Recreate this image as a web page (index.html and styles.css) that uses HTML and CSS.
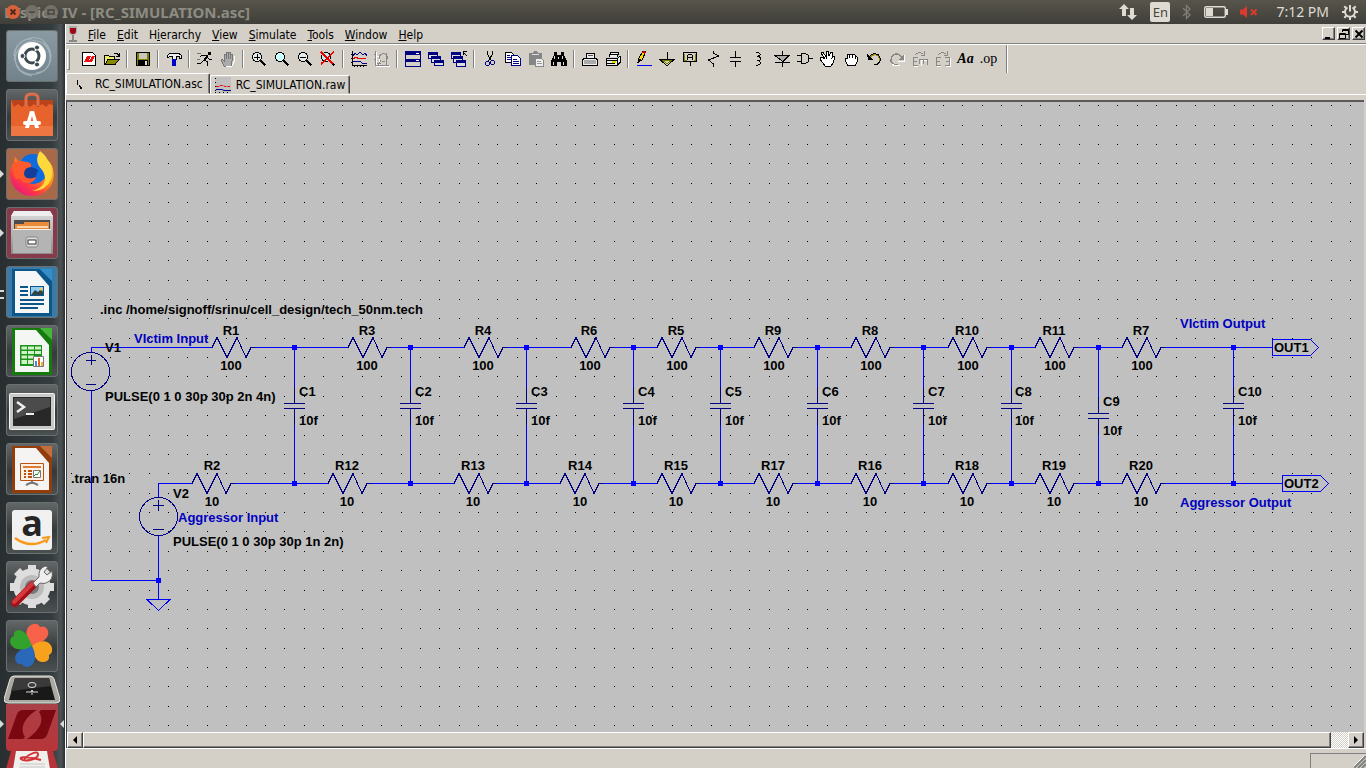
FILE: index.html
```html
<!DOCTYPE html>
<html lang="en">
<head>
<meta charset="utf-8">
<title>LTspice IV - [RC_SIMULATION.asc]</title>
<link rel="stylesheet" href="styles.css">
</head>
<body>
<header class="panel">
  <h1 class="panel-title">LTspice IV - [RC_SIMULATION.asc]</h1>
  <div class="window-buttons">
    <button class="wb wb-close" aria-label="Close"><svg width="14" height="14" viewBox="0 0 14 14"><path d="M4.500 4.500l5 5m0-5l-5 5" stroke="#4a2a1e" stroke-width="1.800"/></svg></button>
    <button class="wb" aria-label="Minimize"><svg width="14" height="14" viewBox="0 0 14 14"><path d="M4 7h6" stroke="#45443f" stroke-width="1.600"/></svg></button>
    <button class="wb" aria-label="Restore"><svg width="14" height="14" viewBox="0 0 14 14"><path d="M4 5h6v4H4z" fill="none" stroke="#45443f" stroke-width="1.400"/></svg></button>
  </div>
  <div class="tray">
    <svg width="18" height="16" viewBox="0 0 18 16" fill="#dfdbd2"><path d="M5 0l5 5H7v7H3V5H0zM13 16l-5-5h3V4h4v7h3z"/></svg>
    <span class="lang">En</span>
    <svg width="10" height="16" viewBox="0 0 10 16" fill="none" stroke="#7f7d75" stroke-width="1.300"><path d="M1 4l7 7-3.500 3.500v-13L8 5l-7 7"/></svg>
    <svg class="battery" width="24" height="12" viewBox="0 0 24 12"><rect x=".700" y=".700" width="20.600" height="10.600" rx="1.500" fill="none" stroke="#dfdbd2" stroke-width="1.400"/><path fill="#dfdbd2" d="M2 2h7v8H2zM22 3h2v6h-2z"/></svg>
    <svg class="sound" width="18" height="12" viewBox="0 0 18 12"><path fill="#df382c" d="M0 3.500h3L7 0v12L3 8.500H0z"/><path d="M11 3.500l5.500 5.500m0-5.500L11 9" stroke="#df382c" stroke-width="2"/></svg>
    <time class="clock">7:12 PM</time>
    <svg width="16" height="16" viewBox="0 0 16 16" fill="none" stroke="#dfdbd2"><path d="M5.500 3.500a5 5 0 1 0 5 0" stroke-width="2"/><path d="M8 1v6.500M0 8h3M13 8h3M8 13v3M2.300 2.300l2 2M13.700 2.300l-2 2M2.300 13.700l2-2M13.700 13.700l-2-2" stroke-width="2"/></svg>
  </div>
</header>
<div class="desktop">
  <nav class="dock" aria-label="Launcher">
    <a class="tile tile-dash" href="#dash" aria-label="Dash"><svg width="52" height="52" viewBox="0 0 52 52"><g fill="none" stroke="#b4c0c6" stroke-width="1.200" opacity=".7"><path d="M8 26C8 8 34 2 40 14M14 40C2 24 12 8 26 9M26 46C10 44 6 30 12 20M44 26C46 42 26 50 14 40M38 12c12 10 8 30-8 31M8 30C14 4 42 6 44 26"/></g><circle cx="26" cy="26" r="14" fill="#fff"/><circle cx="26" cy="26" r="7" fill="none" stroke="#3d4a50" stroke-width="3"/><g stroke="#fff" stroke-width="1.500"><path d="M14 26h5M32 16l-3 5M32 36l-3-5"/></g><g fill="#3d4a50" stroke="#fff"><circle cx="16.500" cy="26" r="2.500"/><circle cx="31" cy="17.500" r="2.500"/><circle cx="31" cy="34.500" r="2.500"/></g></svg></a>
    <a class="tile" href="#software" aria-label="Software"><svg width="52" height="52" viewBox="0 0 52 52"><path d="M5 11h42v36H5z" fill="#e8622c"/><path d="M5 11h42v5l-4-1-3 3-4-3-4 3-4-3-4 3-4-3-4 3-4-3-4 3z" fill="#bb431b"/><path d="M5 37h42v10H5z" fill="#ee7642"/><path d="M20 17V9q0-4 6-4t6 4v8" fill="none" stroke="#dd6e4a" stroke-width="3"/><path d="M24 22h4l5 17h-4l-3-12-3 12h-4z" fill="#fff"/><rect x="17" y="32" width="18" height="4" rx="2" fill="#fff"/></svg></a>
    <a class="tile tile-firefox running" href="#firefox" aria-label="Firefox"><svg width="52" height="52" viewBox="0 0 52 52"><defs><linearGradient id="fx" x1="1" y1="0" x2=".2" y2="1"><stop offset="0" stop-color="#fff44f"/><stop offset=".4" stop-color="#ff980e"/><stop offset=".75" stop-color="#ff3647"/><stop offset="1" stop-color="#e31587"/></linearGradient></defs><path d="M8 14l1-5 4 5C22 4 40 4 46 18c6 18-6 30-20 30S1 35 5 20z" fill="url(#fx)"/><circle cx="27" cy="21" r="15" fill="#0f6be0"/><path d="M16 22c5-5 12-3 16 0l-3 9H18z" fill="#133f9b"/><path d="M8 14c7-2 12 0 12 0 4 0 6 2 5 5-7 1-6 4-7 6 0 8 10 5 12 4-2 8-13 8-17 1C10 35 5 26 8 14z" fill="#ff5a2d"/><path d="M34 3c2 2 6 4 8 10 10 15 0 31-16 30 15-4 15-14 10-21-5-6-7-11-2-19z" fill="#ffd93b"/></svg></a>
    <a class="tile tile-files running" href="#files" aria-label="Files"><svg width="52" height="52" viewBox="0 0 52 52"><defs><linearGradient id="fm" x2="0" y2="1"><stop stop-color="#dcdcdc"/><stop offset="1" stop-color="#8b8b8b"/></linearGradient></defs><path d="M8 4h36l3 5v38H5V9z" fill="url(#fm)"/><path d="M8 4h36l3 5H5z" fill="#eee"/><path d="M8 13h36v10H8z" fill="#4c4c4c"/><path d="M9 17h9v-2h25v8H9z" fill="#ec8a3c"/><path d="M11 19h31v2H11z" fill="#f7d6ae"/><path d="M7 22h38v24H7z" fill="#b4b4b4"/><path d="M7 22h38v1H7z" fill="#eee"/><rect x="20" y="30" width="12" height="10" rx="2" fill="#ddd" stroke="#888"/><rect x="22" y="33" width="8" height="4" fill="#fff" stroke="#333"/></svg></a>
    <a class="tile tile-writer running-many" href="#writer" aria-label="Writer"><svg width="52" height="52" viewBox="0 0 52 52"><path d="M6 3h28l12 12v35H6z" fill="#0d568a"/><path d="M34 3h12v12z" fill="#328fca"/><path d="M9 5h21l13 15v27H9z" fill="#f4f6f7"/><path d="M14 21h8M14 25h8M14 29h8M14 34h24M14 38h24M14 42h18" stroke="#0d568a" stroke-width="2"/><path d="M24 20h14v10H24z" fill="#0d568a"/><path d="M25 21h12v8H25z" fill="#90cdf0"/><path d="M25 29l4-5 3 2 3-3 2 3v3z" fill="#344"/><circle cx="35" cy="23" r="1.500" fill="#f8cf52"/></svg></a>
    <a class="tile" href="#calc" aria-label="Calc"><svg width="52" height="52" viewBox="0 0 52 52"><path d="M6 3h28l12 12v35H6z" fill="#157b0c"/><path d="M34 3h12v12z" fill="#45b83a"/><path d="M9 5h21l13 15v27H9z" fill="#f4f6f4"/><path d="M14 20h22v21H14z" fill="#1c911b"/><path d="M15.500 21.500H21v3h-5.500zM22 21.500h6v3h-6zM29 21.500h6v3h-6zM15.500 26H21v3h-5.500zM22 26h6v3h-6zM29 26h6v3h-6zM15.500 30.500H21v3h-5.500zM22 30.500h6v3h-6zM15.500 35H21v4h-5.500zM22 35h6v4h-6z" fill="#d1f4c7"/><path d="M27.500 31.500h10v10h-10z" fill="#fff" stroke="#777"/><path d="M29 36h2v5h-2z" fill="#3a8fd8"/><path d="M32 33h2v8h-2z" fill="#e4622a"/><path d="M35 37h2v4h-2z" fill="#f0b429"/></svg></a>
    <a class="tile" href="#terminal" aria-label="Terminal"><svg width="52" height="52" viewBox="0 0 52 52"><rect x="3.500" y="9.500" width="45" height="36" rx="1" fill="#c9c9c9" stroke="#f3f3f3"/><path d="M7 13h38v29H7z" fill="#282828"/><path d="M8 14h36v9L8 35z" fill="#4b4b4b"/><path d="M11 18l7 5-7 5" fill="none" stroke="#eee" stroke-width="2.500"/><path d="M20 30h8" stroke="#eee" stroke-width="2"/></svg></a>
    <a class="tile" href="#impress" aria-label="Impress"><svg width="52" height="52" viewBox="0 0 52 52"><path d="M6 3h28l12 12v35H6z" fill="#933d0b"/><path d="M34 3h12v12z" fill="#c66d3c"/><path d="M9 5h21l13 15v27H9z" fill="#f5f4f3"/><path d="M14.500 20.500h23v17h-23z" fill="#fff1e5" stroke="#b95113"/><path d="M17 23h18v2H17z" fill="#de7d37"/><path d="M18 28h2M18 31h2M18 34h2M22 28h4M22 31h4M22 34h4" stroke="#b95113" stroke-width="2"/><path d="M27.500 27.500h7v7h-7z" fill="#fff" stroke="#777"/><path d="M28 33l2-2 1 1 3-4" fill="none" stroke="#188c24"/><path d="M20 42l6-3 6 3M26 38v3" fill="none" stroke="#777" stroke-width="2"/></svg></a>
    <a class="tile" href="#amazon" aria-label="Amazon"><svg width="52" height="52" viewBox="0 0 52 52"><rect x="6" y="8" width="40" height="40" rx="3" fill="#f1f1f1"/><text class="amazon-letter" x="26" y="34">a</text><path d="M9 36q15 11 31 2" fill="none" stroke="#f79a19" stroke-width="2.500"/><path d="M36 36l7-1-3 6" fill="none" stroke="#f79a19" stroke-width="2"/></svg></a>
    <a class="tile" href="#settings" aria-label="System Settings"><svg width="52" height="52" viewBox="0 0 52 52"><circle cx="26" cy="26" r="14" fill="none" stroke="#ddd" stroke-width="9"/><path d="M22 4h8v6h-8zM22 41h8v6h-8zM4 22h6v8H4zM42 22h6v8h-6zM8 13l6-6 5 5-6 6zM33 39l6-6 5 5-6 6zM8 38l6 6 5-5-6-6zM33 12l5 5 6-6-5-5z" fill="#ddd"/><circle cx="26" cy="26" r="12" fill="#bbb"/><circle cx="26" cy="26" r="7" fill="#777"/><path d="M9 42L27 24" stroke="#a01218" stroke-width="8" stroke-linecap="round"/><path d="M8 41L27 22" stroke="#d6383d" stroke-width="4" stroke-linecap="round"/><path d="M27 22l6-6q-1-8 6-11l3 1-4 5 3 3 5-4q2 9-6 12-3 1-6 0l-4 4z" fill="#eee" stroke="#666"/></svg></a>
    <a class="tile" href="#clover" aria-label="Clover"><svg width="52" height="52" viewBox="0 0 52 52"><path d="M26 26C19 18 18 7 27 4q5-1 7 3 6-2 8 4c2 8-8 12-16 15z" fill="#f8624a"/><path d="M26 26c8-7 18-6 20 2q1 5-3 7 1 6-5 7c-8 1-11-8-12-16z" fill="#f8a11d"/><path d="M26 26c5 9 4 19-4 21q-5 0-6-3-6 1-7-5c0-8 9-12 17-13z" fill="#2a68ba"/><path d="M26 26C16 32 6 30 4 22q0-5 4-6-1-6 5-6c8 1 10 9 13 16z" fill="#32a22d"/></svg></a>
    <a class="folded" href="#camera" aria-label="Camera"><svg width="56" height="29" viewBox="0 0 56 29"><path d="M10 1h36q3 0 4 3l6 20q0 4-4 4H4q-4 0-4-4L6 4q1-3 4-3z" fill="#aaaaa2" stroke="#e5e5dc"/><path d="M11 3h34l6 22H5z" fill="#191919"/><path d="M11 3h34l2 8L7 16z" fill="#3a3a3a"/><g fill="none" stroke="#ddd"><ellipse cx="28" cy="10" rx="4" ry="2.500"/><path d="M22 17h5l1-2 1 2h5M28 15v5"/></g></svg></a>
    <a class="ltspice running" href="#ltspice" aria-label="LTspice"><svg width="52" height="47" viewBox="0 0 52 47"><path d="M2 35L11 10q2-4 6-4h14C19 13 13 24 19 33l-2 2zM21 35C33 27 39 17 33 8l2-2h15L41 31q-2 4-6 4z" fill="#790810"/></svg></a>
    <a class="evince" href="#documents" aria-label="Documents"><svg width="52" height="18" viewBox="0 0 52 18"><path d="M5 0h42l5 18H0z" fill="#b8343a"/><path d="M10 0h31l3 18H7z" fill="#efefeb"/><path d="M18 8c6-6 15-9 14-4s-14 7-17 4 11-2 20 1" fill="none" stroke="#d43237" stroke-width="2"/><path d="M14 13h25M13 16h26" stroke="#c6c6c6"/></svg></a>
  </nav>
  <main class="app">
    <div class="menu-row">
      <svg class="wine" width="10" height="16" viewBox="0 0 10 16"><path d="M1 0h8v5q0 4-4 4T1 5z" fill="#aaa"/><path d="M2 2h6v3q0 3-3 3T2 5z" fill="#a00516"/><path d="M4 9h2v5h3v2H1v-2h3z" fill="#888"/></svg>
      <nav class="menus" aria-label="Menu">
        <a href="#file"><u>F</u>ile</a><a href="#edit"><u>E</u>dit</a><a href="#hierarchy">H<u>i</u>erarchy</a><a href="#view"><u>V</u>iew</a><a href="#simulate"><u>S</u>imulate</a><a href="#tools"><u>T</u>ools</a><a href="#window"><u>W</u>indow</a><a href="#help"><u>H</u>elp</a>
      </nav>
      <div class="mdi">
        <button aria-label="Minimize document"><svg width="10" height="10" viewBox="0 0 10 10"><path d="M1 8h5v2H1z"/></svg></button>
        <button aria-label="Restore document"><svg width="10" height="10" viewBox="0 0 10 10"><path fill="none" stroke="#000" d="M3.500 3V.5h6v5H7M.500 4.500h6v5h-6zM3 1.500h7M0 5.500h7"/></svg></button>
        <button aria-label="Close document"><svg width="10" height="10" viewBox="0 0 10 10"><path stroke="#000" stroke-width="2" d="M1.500 1.500l7 7m0-7l-7 7"/></svg></button>
      </div>
    </div>
    <div class="toolbar" role="toolbar" aria-label="Main toolbar">
      <span class="grip"></span>
      <button aria-label="New schematic"><svg viewBox="0 0 16 16"><path d="M1.500 1.500h10l3 3v10h-13z" fill="#fff" stroke="#000"/><path d="M3 11l3-6h4L8 9h1l-2 2zM8 11l2-4H9l2-2h3l-3 6z" fill="#e11"/></svg></button>
      <button aria-label="Open"><svg viewBox="0 0 16 16"><path d="M.500 13.500v-9h4l1 1h5v3M10 2.500h3l2 2M15 2v3h-3" fill="none" stroke="#000"/><path d="M1 5h3l1 1h5v3H4l-3 4z" fill="#ee6"/><path d="M1 13.500l3-5h11l-4 5z" fill="#880" stroke="#000"/></svg></button>
      <i class="sep"></i>
      <button aria-label="Save"><svg viewBox="0 0 16 16"><path d="M1.500 1.500h13v13h-13z" fill="#808000" stroke="#000"/><path d="M4 2h8v6H4z" fill="#c9c6be"/><path d="M3 9h10v6H3z"/><path d="M10 10h2v4h-2z" fill="#ddd"/></svg></button>
      <i class="sep"></i>
      <button aria-label="Control panel"><svg viewBox="0 0 16 16"><path d="M1 6q1-4 6-4h5l3 2v3h-2V5h-3v3H6V5H4L2 7z" fill="#eee" stroke="#000"/><path d="M6 8h4v7H6z" fill="#0000c8"/></svg></button>
      <i class="sep"></i>
      <button aria-label="Run"><svg viewBox="0 0 16 16"><path d="M11 1h3v3h-3z"/><path d="M10.500 4L7 9l4 2-1 4M7 9l-3 3H0M10 5L5 4 3 6M10 6l2 2h3" fill="none" stroke="#000"/><path d="M10 4L7 9h2l2-4z"/><path d="M0 2.500h4M0 8.500h3" stroke="#777"/></svg></button>
      <button aria-label="Halt" disabled><svg viewBox="0 0 16 16"><path d="M4 15L1 9l1-1 2 2V3h2v5V1h2v7V1h2v7V3h2v7l-1 5z" fill="#aaa" stroke="#777"/><path d="M14 5v6l-2 4H6" fill="none" stroke="#fff"/></svg></button>
      <i class="sep"></i>
      <button aria-label="Zoom in"><svg viewBox="0 0 16 16"><circle cx="6" cy="6" r="4.500" fill="#e5ecec" stroke="#000"/><path d="M9.500 9.500l5 5" stroke="#000" stroke-width="2.500"/><path d="M3 6.500h6M6.500 3v6" stroke="#000"/></svg></button>
      <button aria-label="Pan"><svg viewBox="0 0 16 16"><circle cx="6" cy="6" r="4.500" fill="#cff" stroke="#000"/><path d="M9.500 9.500l5 5" stroke="#000" stroke-width="2.500"/></svg></button>
      <button aria-label="Zoom out"><svg viewBox="0 0 16 16"><circle cx="6" cy="6" r="4.500" fill="#e5ecec" stroke="#000"/><path d="M9.500 9.500l5 5" stroke="#000" stroke-width="2.500"/><path d="M3 6.500h6" stroke="#000"/></svg></button>
      <button aria-label="Zoom to fit"><svg viewBox="0 0 16 16"><circle cx="6" cy="6" r="4.500" fill="#bee" stroke="#000"/><path d="M9.500 9.500l5 5" stroke="#000" stroke-width="2.500"/><path d="M1 13L14 1M1 1l12 12" stroke="#e00" stroke-width="1.500"/></svg></button>
      <i class="sep"></i>
      <button aria-label="Autorange"><svg viewBox="0 0 16 16"><path d="M1.500 0v14.500H16M3.500 14v2M6.500 14v2M9.500 14v2M12.500 14v2M0 3.500h2M0 7.500h2M0 11.500h2" fill="none" stroke="#000"/><path d="M2 5l2-3 2 2 3-3 3 3 2-2 2 3M2 11l3-1h4l2 2h5" fill="none" stroke="#000080"/><path d="M2 8l3-2 3 2 4-1 3 1" fill="none" stroke="#e00"/></svg></button>
      <button aria-label="FFT" disabled><svg viewBox="0 0 16 16"><path d="M2.500 1v14.500H16M5.500 14V5M1 5h4" fill="none" stroke="#fff"/><path d="M1.500 0v14.500H15M0 3.500h2M0 8.500h2M4.500 14l2-4M12.500 2v12M3 12.500h4" fill="none" stroke="#888"/><circle cx="9.500" cy="6.500" r="4" fill="none" stroke="#888"/></svg></button>
      <i class="sep"></i>
      <button aria-label="Tile windows"><svg viewBox="0 0 16 16"><path d="M.500.500h15v15H.500z" fill="#d4d0c8" stroke="#000080"/><path d="M0 1h16v3H0zM0 8h16v3H0z" fill="#000080"/><path d="M11 2h3M11 9h3" stroke="#fff"/></svg></button>
      <button aria-label="Cascade windows"><svg viewBox="0 0 16 16"><path d="M.500 1.500h9v6h-9zM3.500 5.500h9v6h-9zM6.500 9.500h9v5h-9z" fill="#ddd" stroke="#000080"/><path d="M0 1h10v3H0zM3 5h10v3H3zM6 9h10v3H6z" fill="#000080"/></svg></button>
      <button aria-label="Close all windows"><svg viewBox="0 0 16 16"><path d="M.500 1.500h9v6h-9zM2.500 5.500h9v6h-9zM5.500 9.500h9v6h-9z" fill="#ddd" stroke="#000080"/><path d="M0 1h10v3H0zM2 5h10v3H2zM5 9h10v3H5z" fill="#000080"/><path d="M16 5l-4-4M12 4V.5h4" fill="none" stroke="#000"/></svg></button>
      <i class="sep"></i>
      <button aria-label="Cut"><svg viewBox="0 0 16 16"><path d="M5.500 0v3l4 7M10.500 0v3l-4 7" fill="none" stroke="#000"/><g fill="none" stroke="#000080"><circle cx="5.500" cy="12.500" r="2"/><circle cx="10.500" cy="11.500" r="2"/></g></svg></button>
      <button aria-label="Copy"><svg viewBox="0 0 16 16"><path d="M.500 1.500h6l3 3v7h-9z" fill="#fff" stroke="#000"/><path d="M6.500 4.500h6l3 3v7h-9z" fill="#fff" stroke="#000080"/><path d="M2 4.500h3M2 6.500h4M2 8.500h4M8 8.500h4M8 10.500h6M8 12.500h6" stroke="#000080"/></svg></button>
      <button aria-label="Paste" disabled><svg viewBox="0 0 16 16"><path d="M1 2h4l1-2h3l1 2h4v12H1z" fill="#858585"/><path d="M4 3h7" stroke="#ddd"/><path d="M7.500 7.500h6l2 2v6h-8z" fill="#eee" stroke="#888"/><path d="M9 10.500h4M9 12.500h5" stroke="#999"/></svg></button>
      <button aria-label="Find"><svg viewBox="0 0 16 16"><path d="M3 1h3v3h4V1h3v3l3 6v5h-6v-4H6v4H0v-5l3-6z"/><path d="M3 5v3M11 5v3M2 11v3M12 11v3M7 6v2" stroke="#ddd"/></svg></button>
      <i class="sep"></i>
      <button aria-label="Print setup"><svg viewBox="0 0 16 16"><path d="M4 7l1-5h7l1 5M1.500 7.500h13l1 2v5H.500v-5z" fill="#eee" stroke="#000"/><path d="M2 9h12v4H2z" fill="#aaa"/><path d="M6 4.500h5" stroke="#555"/></svg></button>
      <button aria-label="Print"><svg viewBox="0 0 16 16"><path d="M4 6l2-5h8l-2 5M1 7.500h11l3-2v6l-3 3H1z" fill="#eee" stroke="#000"/><path d="M1 9.500h11M2 12.500h8M12 7v7M6 3.500h6" stroke="#000"/><path d="M7 11h4" stroke="#dd0" stroke-width="2"/></svg></button>
      <i class="sep"></i>
      <button aria-label="Wire"><svg viewBox="0 0 16 16"><path d="M2 11l1-4 4-7h3l-4 9z" fill="#fd0" stroke="#000"/><path d="M2 12l1-4 3 1z"/><path d="M7 0l3 1-1 2-3-1z" fill="#c00"/><path d="M1 14.500h15" stroke="#00f"/></svg></button>
      <button aria-label="Ground"><svg viewBox="0 0 16 16"><path d="M8.500 1v7M1 8.500h14L8 15z" fill="#d8d89a" stroke="#000"/><path d="M4 9.500h8L8 13z" fill="#d4d0c8" stroke="#770"/></svg></button>
      <button aria-label="Label net"><svg viewBox="0 0 16 16"><rect x="1.500" y="1.500" width="13" height="9" rx="1" fill="#d4d0c8" stroke="#000"/><path d="M8.500 11v4M5.500 9V5l1-2h3l1 2v4M6 6.500h4" fill="none" stroke="#000"/><path d="M2.500 3v6.500h2M13.500 3v6.500h-2" fill="none" stroke="#880"/></svg></button>
      <button aria-label="Resistor"><svg viewBox="0 0 16 16"><path d="M8.500 0v2l5 3-10 4 5 4v3" fill="none" stroke="#000"/></svg></button>
      <button aria-label="Capacitor"><svg viewBox="0 0 16 16"><path d="M7.500 0v6M2 6.500h11M2 10.500h11M7.500 10v6" fill="none" stroke="#000"/></svg></button>
      <button aria-label="Inductor"><svg viewBox="0 0 16 16"><path d="M5 1.500q5 0 4 3l-3 1q5 0 3 4H6q4 0 3 4l-4 1" fill="none" stroke="#000"/></svg></button>
      <button aria-label="Diode"><svg viewBox="0 0 16 16"><path d="M8.500 0v4M1 4.500h14l-6 6zM1 11.500h15M8.500 11v5" fill="#aaa" stroke="#000"/></svg></button>
      <button aria-label="Component"><svg viewBox="0 0 16 16"><path d="M4.500 2.500H8q4 1 4 5t-4 5H4.500zM0 4.500h4M0 10.500h4M12 7.500h4" fill="#d4d0c8" stroke="#000"/></svg></button>
      <button aria-label="Move"><svg viewBox="0 0 16 16"><path d="M5 15L0 8V6h2l3 2-4-6 2-1 3 5L6 0h2l1 5 2-4 2 1-1 5 2-2 1 1-2 6-2 3z" fill="#fff" stroke="#000"/></svg></button>
      <button aria-label="Drag"><svg viewBox="0 0 16 16"><path d="M5 14.500L2 9V7h2V4l2-1 2 1 2-1 2 1 2 2v5l-2 3.500z" fill="#fff" stroke="#000"/><path d="M6.500 4v3M9.500 4v3M12.500 5v3" stroke="#000"/></svg></button>
      <button aria-label="Undo"><svg viewBox="0 0 16 16"><path d="M4 6q2-4 6-3 5 1 4 7-2 4-6 4" fill="none" stroke="#000"/><path d="M4 7q2-4 6-3 4 1 3 6" fill="none" stroke="#980"/><path d="M1 3l1 6h5z"/></svg></button>
      <button aria-label="Redo" disabled><svg viewBox="0 0 16 16"><path d="M13 7q-2-4-6-4-5 1-5 7 1 4 7 4" fill="none" stroke="#888" stroke-width="1.500"/><path d="M15 3v6H9z" fill="#888"/><path d="M15 4v6H9M3 13q3 3 8 1" fill="none" stroke="#fff"/></svg></button>
      <button aria-label="Rotate" disabled><svg viewBox="0 0 16 16"><path d="M2 15.500h4M9.500 15V9.500h6" fill="none" stroke="#fff"/><path d="M3 4q4-4 8-1M12.500 0v4.500H9M6 6.500H1.500v8H6M1 10.500h4M7 8.500h8.500v5M11.500 8v5M7.500 8v5" fill="none" stroke="#888"/></svg></button>
      <button aria-label="Mirror" disabled><svg viewBox="0 0 16 16"><path d="M2 15.500h4M15.500 7v8.500H11" fill="none" stroke="#fff"/><path d="M3 4q4-4 8-1M12.500 0v4.500H9M6 6.500H1.500v8H6M1 10.500h4M10 6.500h4.500v8H10M11 10.500h4" fill="none" stroke="#888"/></svg></button>
      <button class="word aa">Aa</button>
      <button class="word op">.op</button>
      <i class="sep end"></i>
    </div>
    <div class="tabs" role="tablist">
      <button class="tab active" role="tab" aria-selected="true"><svg width="16" height="16" viewBox="0 0 16 16"><path d="M4 4v5h2v1h1v1h1v2H6v-2H5V9H3V4z"/></svg>RC_SIMULATION.asc</button>
      <button class="tab" role="tab"><svg width="16" height="16" viewBox="0 0 16 16"><path d="M0 0h16v16H0z" fill="#c0c0c0"/><path d="M.500 1v14M0 15.500h16" stroke="#000" stroke-dasharray="1 3"/><path d="M1 9.500h3l1-1h3l2 1h5" fill="none" stroke="#e00" stroke-dasharray="3 1"/><path d="M1 12.500h6l2 1h7" fill="none" stroke="#000080"/></svg>RC_SIMULATION.raw</button>
    </div>
    <section class="document">
      <svg class="schematic" role="img" aria-label="RC coupled line schematic">
        <defs>
          <pattern id="grid" x="71" y="105" width="155" height="155" patternUnits="userSpaceOnUse">
            <path d="M0 .5h155M0 20.500h155M0 39.500h155M0 58.500h155M0 78.500h155M0 97.500h155M0 116.500h155M0 136.500h155" stroke="#000" stroke-dasharray="1 19 1 18 1 18 1 19 1 18 1 18 1 19 1 18"/>
          </pattern>
          <path id="res" d="M0 .5l5-10 10 20 10-20 9 20 5-10h4" class="part"/>
          <g id="cap"><path class="wire" d="M.500 0v136"/><path class="part" d="M.500 40v16M-10 56.500h21M-10 61.500h21M.500 62v16"/><path class="gap" d="M-1 57h3v4h-3z"/></g>
          <path id="node" d="M-2-2h5v5h-5z" fill="#00f"/>
        </defs>
        <g transform="translate(-67 -102)">
          <rect x="67" y="102" width="100%" height="100%" fill="url(#grid)"/>
          <path class="wire" d="M91.500 352v-4.500H212M251 347.500h97M387 347.500h77M503 347.500h68M610 347.500h47M696 347.500h58M793 347.500h58M890 347.500h58M987 347.500h48M1074 347.500h48M1161 347.500h111"/>
          <path class="wire" d="M158.500 498v-14.500H192M231 483.500h97M367 483.500h87M493 483.500h68M600 483.500h57M696 483.500h58M793 483.500h58M890 483.500h58M987 483.500h48M1074 483.500h48M1161 483.500h121"/>
          <path class="wire" d="M91.500 390v190.500h67M158.500 535v64.500M147 599.500h23l-11.500 11z"/>
          <path class="wire" d="M1272.500 339.500h38l8 8-8 8h-38zM1282.500 475.500h38l8 8-8 8h-38z"/>
          <g class="part"><circle cx="90.500" cy="371.500" r="19"/><path d="M91.500 355v10M86 360.500h10M86 384.500h10"/><circle cx="158.500" cy="516.500" r="19"/><path d="M158.500 500v11M153 505.500h11M153 529.500h11"/></g>
          <use href="#res" x="212" y="347"/><use href="#res" x="348" y="347"/><use href="#res" x="464" y="347"/><use href="#res" x="571" y="347"/><use href="#res" x="657" y="347"/><use href="#res" x="754" y="347"/><use href="#res" x="851" y="347"/><use href="#res" x="948" y="347"/><use href="#res" x="1035" y="347"/><use href="#res" x="1122" y="347"/>
          <use href="#res" x="192" y="483"/><use href="#res" x="328" y="483"/><use href="#res" x="454" y="483"/><use href="#res" x="560" y="483"/><use href="#res" x="657" y="483"/><use href="#res" x="754" y="483"/><use href="#res" x="851" y="483"/><use href="#res" x="948" y="483"/><use href="#res" x="1035" y="483"/><use href="#res" x="1122" y="483"/>
          <use href="#cap" x="294" y="347"/><use href="#cap" x="410" y="347"/><use href="#cap" x="526" y="347"/><use href="#cap" x="633" y="347"/><use href="#cap" x="720" y="347"/><use href="#cap" x="817" y="347"/><use href="#cap" x="923" y="347"/><use href="#cap" x="1011" y="347"/><use href="#cap" x="1233" y="347"/>
          <path class="wire" d="M1098.500 347v136"/><path class="part" d="M1098.500 397v16M1088 413.500h21M1088 418.500h21M1098.500 419v16"/><path class="gap" d="M1097 414h3v4h-3z"/>
          <g><use href="#node" x="294" y="347"/><use href="#node" x="410" y="347"/><use href="#node" x="526" y="347"/><use href="#node" x="633" y="347"/><use href="#node" x="720" y="347"/><use href="#node" x="817" y="347"/><use href="#node" x="923" y="347"/><use href="#node" x="1011" y="347"/><use href="#node" x="1098" y="347"/><use href="#node" x="1233" y="347"/></g>
          <g><use href="#node" x="294" y="483"/><use href="#node" x="410" y="483"/><use href="#node" x="526" y="483"/><use href="#node" x="633" y="483"/><use href="#node" x="720" y="483"/><use href="#node" x="817" y="483"/><use href="#node" x="923" y="483"/><use href="#node" x="1011" y="483"/><use href="#node" x="1098" y="483"/><use href="#node" x="1233" y="483"/><use href="#node" x="158" y="580"/></g>
          <g class="mid">
            <text x="231" y="335">R1</text><text x="367" y="335">R3</text><text x="483" y="335">R4</text><text x="589" y="335">R6</text><text x="676" y="335">R5</text><text x="773" y="335">R9</text><text x="870" y="335">R8</text><text x="967" y="335">R10</text><text x="1054" y="335">R11</text><text x="1141" y="335">R7</text>
            <text x="231" y="370">100</text><text x="367" y="370">100</text><text x="483" y="370">100</text><text x="590" y="370">100</text><text x="677" y="370">100</text><text x="774" y="370">100</text><text x="871" y="370">100</text><text x="968" y="370">100</text><text x="1055" y="370">100</text><text x="1142" y="370">100</text>
            <text x="212" y="470">R2</text><text x="347" y="470">R12</text><text x="473" y="470">R13</text><text x="580" y="470">R14</text><text x="676" y="470">R15</text><text x="773" y="470">R17</text><text x="870" y="470">R16</text><text x="967" y="470">R18</text><text x="1054" y="470">R19</text><text x="1141" y="470">R20</text>
            <text x="212" y="506">10</text><text x="347" y="506">10</text><text x="473" y="506">10</text><text x="580" y="506">10</text><text x="676" y="506">10</text><text x="773" y="506">10</text><text x="870" y="506">10</text><text x="967" y="506">10</text><text x="1054" y="506">10</text><text x="1141" y="506">10</text>
          </g>
          <g>
            <text x="299" y="396">C1</text><text x="415" y="396">C2</text><text x="531" y="396">C3</text><text x="638" y="396">C4</text><text x="725" y="396">C5</text><text x="822" y="396">C6</text><text x="928" y="396">C7</text><text x="1015" y="396">C8</text><text x="1103" y="406">C9</text><text x="1238" y="396">C10</text>
            <text x="299" y="425">10f</text><text x="415" y="425">10f</text><text x="531" y="425">10f</text><text x="638" y="425">10f</text><text x="725" y="425">10f</text><text x="822" y="425">10f</text><text x="928" y="425">10f</text><text x="1015" y="425">10f</text><text x="1103" y="435">10f</text><text x="1238" y="425">10f</text>
            <text x="105" y="352">V1</text><text x="105" y="401">PULSE(0 1 0 30p 30p 2n 4n)</text><text x="173" y="498">V2</text><text x="173" y="546">PULSE(0 1 0 30p 30p 1n 2n)</text>
            <text x="100" y="314">.inc /home/signoff/srinu/cell_design/tech_50nm.tech</text><text x="71" y="483">.tran 16n</text>
            <text x="1274" y="352">OUT1</text><text x="1284" y="488">OUT2</text>
          </g>
          <g class="note"><text x="134" y="343">VIctim Input</text><text x="178" y="522">Aggressor Input</text><text x="1180" y="328">VIctim Output</text><text x="1180" y="507">Aggressor Output</text></g>
        </g>
      </svg>
      <div class="scrollbar">
        <button aria-label="Scroll left"><svg width="6" height="8" viewBox="0 0 6 8"><path d="M5 0v8L1 4z"/></svg></button>
        <span class="thumb"></span><span class="track"></span>
        <button aria-label="Scroll right"><svg width="6" height="8" viewBox="0 0 6 8"><path d="M1 0v8l4-4z"/></svg></button>
      </div>
    </section>
    <footer class="status"><span class="cell"><svg width="12" height="12" viewBox="0 0 12 12" stroke-width="2"><path d="M0 12L12 0M4 12l8-8M8 12l4-4" stroke="#808080"/><path d="M-1 11L11-1" stroke="#fff" stroke-width="1"/></svg></span></footer>
  </main>
</div>
</body>
</html>
```
FILE: styles.css
```css
* { box-sizing: border-box; }
body {
  margin: 0;
  height: 100vh;
  display: flex;
  flex-direction: column;
  overflow: hidden;
  background: #d4d0c8;
  color: #000;
  font: 12px/16px "DejaVu Sans Condensed", "DejaVu Sans", sans-serif;
}
button { padding: 0; border: 0; background: none; color: inherit; font: inherit; display: flex; align-items: center; justify-content: center; }
a { color: inherit; text-decoration: none; }
svg { display: block; flex: none; }

.panel {
  position: relative;
  flex: none;
  height: 24px;
  display: flex;
  align-items: center;
  justify-content: space-between;
  padding: 0 8px 0 4px;
  background: linear-gradient(#57554b, #3f3e39);
  color: #dfdbd2;
}
.panel-title { margin: 0; font: bold 15px/24px "Noto Sans", sans-serif; color: #8e8c82; }
.window-buttons { position: absolute; left: 6px; top: 5px; display: flex; gap: 5px; }
.wb { width: 14px; height: 14px; border-radius: 50%; background: rgba(121, 119, 110, .85); }
.wb-close { background: #d9623a; }
.tray { display: flex; align-items: center; font: 14px/24px "Noto Sans", sans-serif; }
.lang { margin: 0 12px 0 13px; width: 20px; height: 20px; border-radius: 2px; background: #dfdbd2; color: #45443f; font-size: 13px; line-height: 20px; text-align: center; }
.battery { margin-left: 12px; }
.sound { margin-left: 12px; }
.clock { margin: 0 13px 0 18px; }

.desktop { flex: 1; min-height: 0; display: flex; }
.dock {
  flex: none;
  width: 65px;
  padding: 6px 0 0 6px;
  display: flex;
  flex-direction: column;
  overflow: hidden;
  background: linear-gradient(90deg, #292f31, #343c3f 80%, #4d5355 94%, #2a2e30);
}
.tile {
  position: relative;
  flex: none;
  width: 52px;
  height: 52px;
  margin-bottom: 7px;
  border-radius: 4px;
  box-shadow: inset 0 0 0 1px #6a6f70;
  background: linear-gradient(#646868, #34393b 55%, #4c5152);
}
.tile-dash { background: linear-gradient(#8a9ba4, #72828a); }
.tile-firefox { background: #a7694a; }
.tile-files { background: #873a49; }
.tile-writer { background: #3c7ba6; }
.running::before, .running-many::before { content: ""; position: absolute; left: -6px; top: 22px; border: 4px solid transparent; border-left-color: #d9d9d9; border-right: 0; }
.running-many::before { top: 24px; width: 4px; height: 5px; border: solid #d9d9d9; border-width: 2px 0; }
.ltspice::before { top: 16px; }
.amazon-letter { font: bold 36px "Open Sans", sans-serif; text-anchor: middle; fill: #262626; }
.folded { flex: none; margin: -4px 0 0 -2px; }
.ltspice { position: relative; flex: none; width: 52px; height: 47px; background: linear-gradient(#a94048, #b73539); border-radius: 0 0 4px 4px; }
.ltspice::after { content: ""; position: absolute; right: -6px; top: 16px; border: 4px solid transparent; border-right-color: #d9d9d9; border-left: 0; }
.evince { flex: none; }

.app { flex: 1; min-width: 0; display: flex; flex-direction: column; border-left: 1px solid #fff; background: #d4d0c8; }
.menu-row { flex: none; height: 20px; display: flex; align-items: center; padding: 0 1px 0 2px; border-bottom: 1px solid #808080; }
.menus { flex: 1; display: flex; gap: 11px; padding: 2px 0 0 10px; }
.mdi { display: flex; }
.mdi button, .scrollbar button, .thumb { background: #d4d0c8; border: 1px solid; border-color: #fff #404040 #404040 #fff; box-shadow: inset -1px -1px #808080; }
.mdi button { width: 13px; height: 13px; margin-left: 2px; }

.toolbar { flex: none; height: 29px; display: flex; align-items: center; padding-left: 1px; border-top: 1px solid #fff; }
.toolbar button { width: 23px; height: 23px; }
.toolbar svg { width: 16px; height: 16px; shape-rendering: crispEdges; fill: #000; }
.grip { width: 3px; height: 21px; margin-right: 7px; border: 1px solid; border-color: #fff #808080 #808080 #fff; }
.sep { width: 2px; height: 18px; margin: 0 3px; border-left: 1px solid #808080; border-right: 1px solid #fff; }
.end { height: 28px; margin-left: 6px; }
.toolbar .word { font: bold 14px/16px "Liberation Serif", serif; }
.toolbar .aa { font-style: italic; }
.toolbar .op { font-weight: normal; }

.tabs { flex: none; height: 22px; display: flex; align-items: flex-end; border-bottom: 1px solid #fff; }
.tab { height: 19px; padding: 0 4px; gap: 5px; border: 1px solid; border-color: #fff #404040 transparent #fff; box-shadow: inset -1px 0 #808080; border-radius: 2px 2px 0 0; }
.tab.active { height: 21px; padding: 0 6px 0 7px; }

.document { flex: 1; min-height: 0; margin: 5px 2px 0 0; display: flex; flex-direction: column; border: solid #404040; border-width: 2px 0 0 1px; border-top-color: #5a5a5a; background: #c0c0c0; }
.schematic { flex: 1; min-height: 0; width: 100%; shape-rendering: crispEdges; font: bold 13px "Liberation Sans", Arial, sans-serif; }
.mid { text-anchor: middle; }
.wire { fill: none; stroke: #00f; }
.part { fill: none; stroke: #000080; }
.gap { fill: #c0c0c0; }
.note { fill: #0000c0; }

.scrollbar { flex: none; height: 16px; display: flex; }
.scrollbar button { width: 16px; }
.thumb { flex: 1; }
.track { width: 17px; background: repeating-conic-gradient(#fff 0 25%, #d4d0c8 0 50%) 0 0 / 2px 2px; }

.status { flex: none; height: 20px; display: flex; justify-content: flex-end; align-items: flex-end; padding-top: 4px; border-top: 1px solid #fff; }
.cell { width: 56px; height: 100%; display: flex; justify-content: flex-end; align-items: flex-end; border: solid #808080; border-width: 1px 0 0 1px; }
```
